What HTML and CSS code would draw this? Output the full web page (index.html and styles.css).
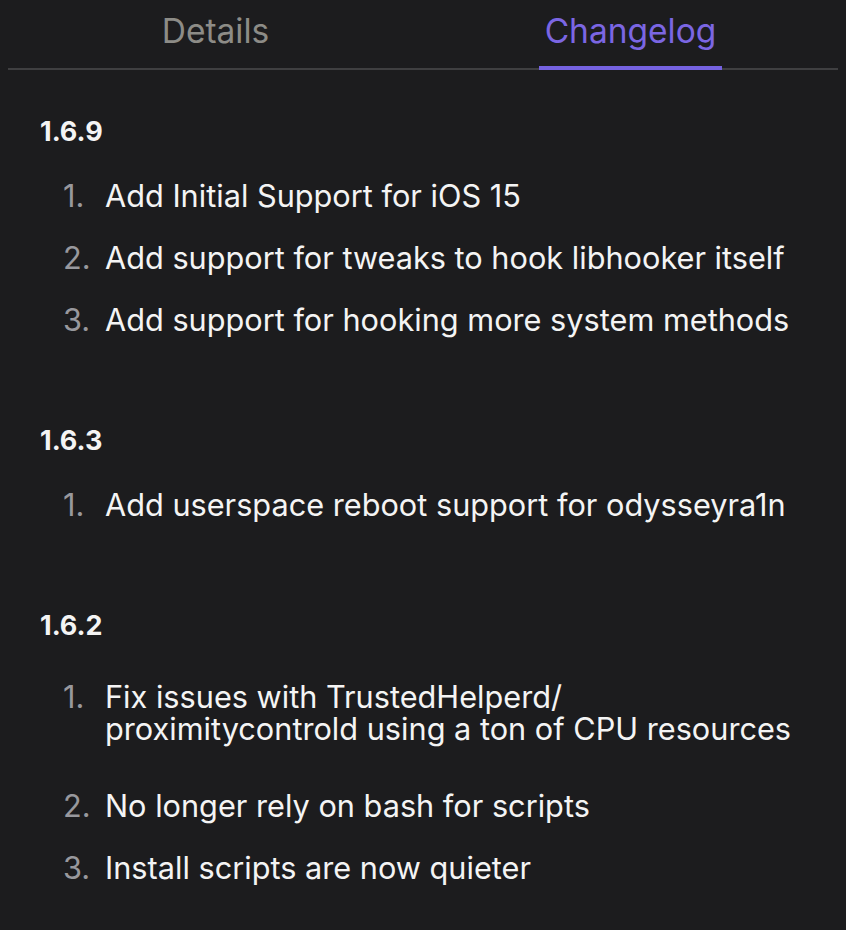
FILE: index.html
```html
<!DOCTYPE html>
<html>
<head>
<meta charset="utf-8">
<link rel="stylesheet" href="styles.css">
</head>
<body>
<div class="page">
  <nav class="tabs">
    <div class="tab">Details</div>
    <div class="tab active"><span class="tab-label">Changelog</span></div>
  </nav>
  <main class="content">
    <section class="release">
      <h2 class="version">1.6.9</h2>
      <ol class="changes">
        <li>Add Initial Support for iOS 15</li>
        <li>Add support for tweaks to hook libhooker itself</li>
        <li>Add support for hooking more system methods</li>
      </ol>
    </section>
    <section class="release">
      <h2 class="version">1.6.3</h2>
      <ol class="changes">
        <li>Add userspace reboot support for odysseyra1n</li>
      </ol>
    </section>
    <section class="release">
      <h2 class="version">1.6.2</h2>
      <ol class="changes">
        <li class="wrap"><span>Fix issues with TrustedHelperd/<br>proximitycontrold using a ton of CPU resources</span></li>
        <li>No longer rely on bash for scripts</li>
        <li>Install scripts are now quieter</li>
      </ol>
    </section>
  </main>
</div>
</body>
</html>
```
FILE: styles.css
```css
html, body {
  margin: 0;
  padding: 0;
  background: #1c1c1e;
}
body {
  font-family: Inter, "Noto Sans", sans-serif;
  color: #f4f4f4;
  width: 846px;
  height: 930px;
  overflow: hidden;
}
.page {
  padding: 0 8px;
}
.tabs {
  display: grid;
  grid-template-columns: 1fr 1fr;
  height: 70px;
  border-bottom: 2px solid #3f3f41;
  box-sizing: border-box;
}
.tab {
  display: flex;
  justify-content: center;
  font-size: 33.5px;
  color: #8d8c87;
  padding-top: 11px;
  line-height: 40px;
}
.tab.active {
  color: #7b66e3;
}
.tab-label {
  display: block;
  height: 55px;
  padding: 0 6px;
  border-bottom: 4px solid #7562e0;
}
.content {
  padding: 0 0 0 32px;
}
.release {
  padding-top: 47px;
  padding-bottom: 42px;
}
.version {
  margin: 0;
  font-size: 27px;
  font-weight: 700;
  line-height: 30px;
}
.changes {
  margin: 32px 0 0 0;
  padding-left: 23px;
  list-style: none;
  counter-reset: item;
}
.changes li {
  counter-increment: item;
  display: grid;
  grid-template-columns: 42px 1fr;
  font-size: 30.7px;
  line-height: 34px;
  margin-bottom: 28px;
}
.changes li:last-child {
  margin-bottom: 0;
}
.changes li::before {
  content: counter(item) ".";
  color: #98989d;
}
.changes li.wrap {
  padding-top: 8px;
  padding-bottom: 16px;
  line-height: 32px;
}
```
